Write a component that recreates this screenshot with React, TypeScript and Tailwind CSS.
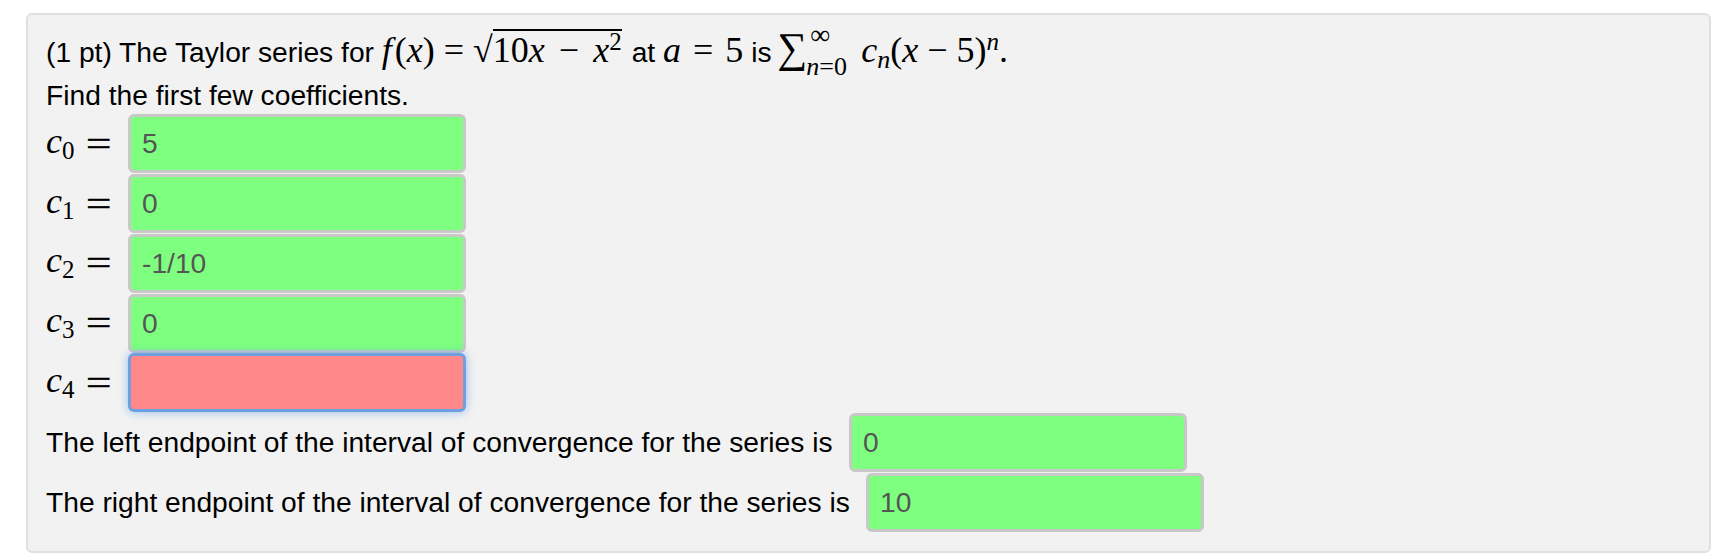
const serif = "font-['Liberation_Serif',serif]"

function Answer({ value, focused, width = 'w-[338px]' }: { value?: string; focused?: boolean; width?: string }) {
  return (
    <input
      readOnly
      value={value ?? ''}
      className={
        focused
          ? `${width} h-[59px] rounded-[6px] border-[3px] border-[#6e9fe0] bg-[#ff8888] px-[11px] text-[#555] text-[28.2px] shadow-[0_0_10px_rgba(82,150,236,0.6)] outline-none`
          : `${width} h-[59px] rounded-[6px] border-[3px] border-[#c8c8c8] bg-[#7fff7f] px-[11px] text-[#555] text-[28.2px] outline-none`
      }
    />
  )
}

function CoefRow({ n, value, focused }: { n: number; value?: string; focused?: boolean }) {
  return (
    <div className="flex h-[59.75px] items-center">
      <span className={`${serif} relative -top-[3px] flex w-[82px] items-baseline text-[36px] text-black`}>
        <i>c</i>
        <span className="relative top-[6px] text-[25px]">{n}</span>
        <span className="relative top-[3px] ml-[12px] origin-left scale-x-125 [-webkit-text-stroke:0.5px_black]">=</span>
      </span>
      <Answer value={value} focused={focused} />
    </div>
  )
}

export default function App() {
  return (
    <div className="h-[559px] w-[1717px] overflow-hidden bg-white pt-[13px] pl-[26px] font-['Liberation_Sans',sans-serif] text-[28.2px] text-black">
      <div className="h-[540px] w-[1685px] rounded-[6px] border-2 border-[#e0e0e0] bg-[#f2f2f2] pt-[8px] pl-[18px]">
        {/* question line */}
        <div className="flex h-[53px] items-baseline whitespace-nowrap">
          <span>(1 pt) The Taylor series for&nbsp;</span>
          <span className={`${serif} flex items-baseline text-[36px]`}>
            <i className="mr-[3px]">f</i>(<i>x</i>)<span className="mx-[9px]">=</span>
            <span className="text-[36px]">√</span>
            <span className="border-t-2 border-black leading-[38px]">
              10<i>x</i>
              <span className="mx-[14px]">−</span>
              <i>x</i>
              <sup className="text-[25px]">2</sup>
            </span>
          </span>
          <span className="ml-[10px]">at&nbsp;</span>
          <span className={`${serif} text-[36px]`}>
            <i>a</i>
            <span className="mx-[12px]">=</span>5
          </span>
          <span>&nbsp;is&nbsp;</span>
          <span className={`${serif} -ml-[2px] flex items-baseline text-[36px]`}>
            <span className="text-[42px] leading-none">∑</span>
            <span className="relative flex w-[45px] flex-col">
              <span className="absolute -top-[20px] left-[3px] text-[28px] leading-none">∞</span>
              <span className="relative top-[13px] -ml-[1px] text-[26px] leading-none">
                <i>n</i>=0
              </span>
            </span>
            <span className="ml-[9px]">
              <i>c</i>
              <i className="relative top-[6px] text-[26px]">n</i>(<i>x</i>
              <span className="mx-[9px]">−</span>5)
              <sup className="text-[25px]">
                <i>n</i>
              </sup>
              .
            </span>
          </span>
        </div>
        <div className="h-[38px] leading-[38px]">Find the first few coefficients.</div>

        <CoefRow n={0} value="5" />
        <CoefRow n={1} value="0" />
        <CoefRow n={2} value="-1/10" />
        <CoefRow n={3} value="0" />
        <CoefRow n={4} focused />

        <div className="flex h-[59.75px] items-center whitespace-nowrap">
          <span className="w-[803px]">The left endpoint of the interval of convergence for the series is</span>
          <Answer value="0" />
        </div>
        <div className="flex h-[59.75px] items-center whitespace-nowrap">
          <span className="w-[820px]">The right endpoint of the interval of convergence for the series is</span>
          <Answer value="10" />
        </div>
      </div>
    </div>
  )
}
